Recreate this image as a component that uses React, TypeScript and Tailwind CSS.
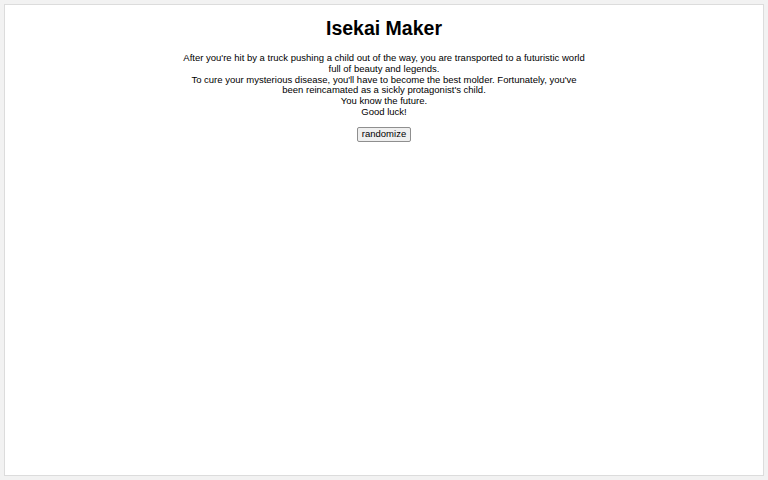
export default function App() {
  return (
    <div className="h-[480px] w-[768px] bg-[#f2f2f2] p-1 font-['Liberation_Sans',Arial,sans-serif] text-black">
      <div className="flex h-[472px] flex-col items-center border border-[#dcdcdc] bg-white">
        <h1 className="mt-[11px] text-[19.5px] font-bold leading-[24px]">Isekai Maker</h1>
        <p className="mt-[13px] max-w-[402px] text-center text-[9.5px] leading-[10.8px]">
          After you're hit by a truck pushing a child out of the way, you are transported to a futuristic world full of beauty and legends.
          <br />
          To cure your mysterious disease, you'll have to become the best molder. Fortunately, you've been reincamated as a sickly protagonist's child.
          <br />
          You know the future.
          <br />
          Good luck!
        </p>
        <button className="mt-[9px] h-[15px] rounded-[2px] border border-[#8f8f8f] bg-[#efefef] px-[4px] text-[9.5px] leading-[12px]">
          randomize
        </button>
      </div>
    </div>
  )
}
